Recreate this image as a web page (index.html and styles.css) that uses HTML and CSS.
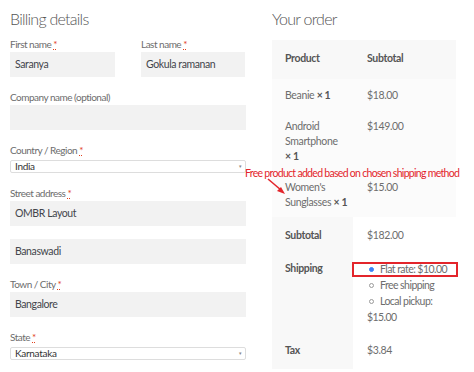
FILE: index.html
```html
<!DOCTYPE html>
<html lang="en">
  <head>
    <meta charset="UTF-8" />
    <meta name="viewport" content="width=device-width, initial-scale=1.0" />
    <title>Checkout</title>
    <link rel="stylesheet" href="styles.css">
  </head>
  <body>
    <div class="checkout">
      <!-- Billing form -->
      <section class="billing">
        <h3 class="title">Billing details</h3>

        <div class="row-two">
          <div class="field">
            <label>First name <abbr>*</abbr></label>
            <div class="input">Saranya</div>
          </div>
          <div class="field">
            <label>Last name <abbr>*</abbr></label>
            <div class="input">Gokula ramanan</div>
          </div>
        </div>

        <div class="field">
          <label>Company name (optional)</label>
          <div class="input"></div>
        </div>

        <div class="field">
          <label>Country / Region <abbr>*</abbr></label>
          <div class="select">India<span class="caret">&#9662;</span></div>
        </div>

        <div class="field">
          <label>Street address <abbr>*</abbr></label>
          <div class="input">OMBR Layout</div>
          <div class="input second">Banaswadi</div>
        </div>

        <div class="field">
          <label>Town / City <abbr>*</abbr></label>
          <div class="input">Bangalore</div>
        </div>

        <div class="field">
          <label>State <abbr>*</abbr></label>
          <div class="select">Karnataka<span class="caret">&#9662;</span></div>
        </div>
      </section>

      <!-- Order summary -->
      <section class="order">
        <h3 class="title">Your order</h3>
        <table class="order-table">
          <colgroup>
            <col class="col-name" />
            <col class="col-total" />
          </colgroup>
          <thead>
            <tr>
              <th>Product</th>
              <th>Subtotal</th>
            </tr>
          </thead>
          <tbody>
            <tr>
              <td>Beanie <strong>&times;&nbsp;1</strong></td>
              <td>$18.00</td>
            </tr>
            <tr>
              <td>Android Smartphone <strong>&times;&nbsp;1</strong></td>
              <td>$149.00</td>
            </tr>
            <tr>
              <td>Women's Sunglasses <strong>&times;&nbsp;1</strong></td>
              <td>$15.00</td>
            </tr>
          </tbody>
          <tfoot>
            <tr>
              <th>Subtotal</th>
              <td>$182.00</td>
            </tr>
            <tr>
              <th>Shipping</th>
              <td>
                <ul class="methods">
                  <li class="chosen"><span class="radio checked"></span>Flat rate: $10.00<span class="highlight"></span></li>
                  <li><span class="radio"></span>Free shipping</li>
                  <li><span class="radio"></span>Local pickup: $15.00</li>
                </ul>
              </td>
            </tr>
            <tr>
              <th>Tax</th>
              <td>$3.84</td>
            </tr>
          </tfoot>
        </table>
      </section>

      <!-- Annotation -->
      <div class="note">Free product added based on chosen shipping method</div>
      <svg class="note-arrow" width="24" height="22" viewBox="0 0 24 22">
        <line x1="2" y1="2" x2="15" y2="13" stroke="#e3252b" stroke-width="1.6" />
        <polygon points="19,17 11,14 15,10" fill="#e3252b" />
      </svg>
    </div>
  </body>
</html>
```

FILE: styles.css
```css
body {
  margin: 0;
  background: #ffffff;
  font-family: Lato, "Noto Sans", sans-serif;
  color: #6d6d6d;
}

.checkout {
  position: relative;
  display: grid;
  grid-template-columns: 236px 184px;
  column-gap: 26px;
  padding: 0 10px;
}

.title {
  margin: 8px 0 0;
  height: 22px;
  font-size: 16px;
  line-height: 22px;
  font-weight: 300;
  letter-spacing: -0.75px;
  color: #555555;
}

/* Billing form */

.billing .title {
  margin-bottom: 8px;
}

.row-two {
  display: grid;
  grid-template-columns: 105px 104px;
  column-gap: 26px;
}

.field {
  margin-bottom: 14px;
}

.field label {
  display: block;
  height: 12px;
  margin-bottom: 2px;
  font-size: 10px;
  line-height: 12px;
  letter-spacing: -0.5px;
  color: #6d6d6d;
}

.field abbr {
  color: #e2401c;
  text-decoration: underline dotted;
}

.input {
  box-sizing: border-box;
  height: 25px;
  padding: 0 5px;
  background: #f2f2f2;
  font-size: 10.5px;
  line-height: 25px;
  letter-spacing: -0.4px;
  color: #43454b;
}

.input.second {
  margin-top: 13px;
}

.select {
  position: relative;
  box-sizing: border-box;
  height: 13px;
  margin-top: 4px;
  padding: 0 4px;
  border: 1px solid #dddddd;
  border-radius: 2px;
  background: #ffffff;
  font-size: 10px;
  line-height: 11px;
  letter-spacing: -0.3px;
  color: #333333;
}

.caret {
  position: absolute;
  right: 3px;
  top: 0;
  font-size: 5px;
  color: #888888;
}

/* Order table */

.order .title {
  margin-bottom: 10px;
}

.order-table {
  width: 184px;
  table-layout: fixed;
  border-collapse: collapse;
  font-size: 10.5px;
  line-height: 15px;
  letter-spacing: -0.35px;
}

.col-name {
  width: 81px;
}

.col-total {
  width: 103px;
}

.order-table th,
.order-table td {
  padding: 9px 8px 7px 14px;
  text-align: left;
  vertical-align: top;
}

.order-table th:first-child,
.order-table td:first-child {
  padding-left: 13px;
  padding-right: 2px;
}

.order-table th {
  font-weight: 700;
  color: #555555;
}

.order-table thead th {
  padding-top: 11px;
  padding-bottom: 13px;
  background: #f8f8f8;
}

.order-table tbody td {
  background: #fbfbfb;
}

.order-table tbody td strong {
  color: #555555;
}

.order-table tfoot th,
.order-table tfoot td {
  padding-top: 11px;
}

.order-table tfoot tr:last-child th,
.order-table tfoot tr:last-child td {
  padding-bottom: 11px;
}

.order-table tfoot th {
  background: #f8f8f8;
}

.order-table tfoot td {
  background: #ffffff;
}

.methods {
  margin: 0;
  padding: 0;
  list-style: none;
  line-height: 16px;
  letter-spacing: -0.55px;
}

.methods li {
  position: relative;
}

.methods li.chosen {
  white-space: nowrap;
}

.radio {
  display: inline-block;
  box-sizing: border-box;
  width: 5px;
  height: 5px;
  margin: 0 6px 1px 2px;
  border: 1px solid #9a9a9a;
  border-radius: 50%;
  vertical-align: middle;
}

.radio.checked {
  border-color: #3b82f6;
  background: #3b82f6;
}

.highlight {
  position: absolute;
  left: -15px;
  right: -10px;
  top: 1px;
  bottom: 0;
  border: 2px solid #e3252b;
}

/* Annotation */

.note {
  position: absolute;
  left: 245px;
  top: 166px;
  font-size: 10.5px;
  line-height: 14px;
  letter-spacing: -0.7px;
  color: #e3252b;
  white-space: nowrap;
}

.note-arrow {
  position: absolute;
  left: 266px;
  top: 177px;
}
```
